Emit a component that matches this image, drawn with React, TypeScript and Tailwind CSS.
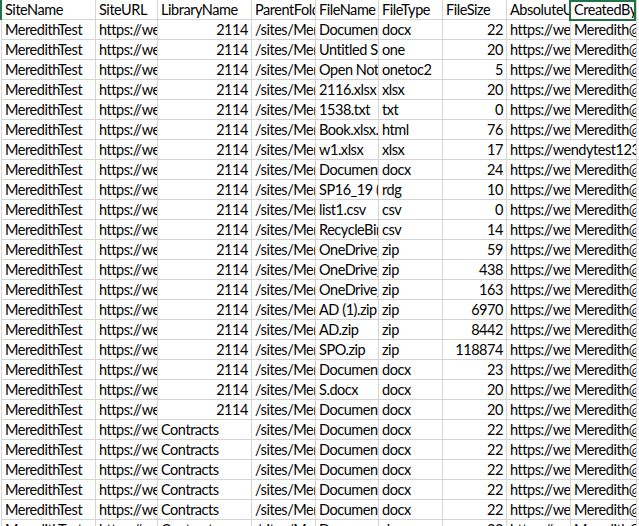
import React from 'react';

type Cell = { text: string; right?: boolean; span?: number };

const widths = [94, 62, 94, 64, 63, 64, 64, 64, 66];
const widthClass = ['w-[94px]', 'w-[62px]', 'w-[94px]', 'w-[64px]', 'w-[63px]', 'w-[64px]', 'w-[64px]', 'w-[64px]', 'w-[66px]'];

const header = ['SiteName', 'SiteURL', 'LibraryName', 'ParentFolder', 'FileName', 'FileType', 'FileSize', 'AbsoluteURL', 'CreatedBy'];

const files: [string, string, string][] = [
  ['Document1.docx', 'docx', '22'],
  ['Untitled Section.one', 'one', '20'],
  ['Open Notebook.onetoc2', 'onetoc2', '5'],
  ['2116.xlsx', 'xlsx', '20'],
  ['1538.txt', 'txt', '0'],
  ['Book.xlsx.html', 'html', '76'],
  ['w1.xlsx', 'xlsx', '17'],
  ['Document.docx', 'docx', '24'],
  ['SP16_19 (1).rdg', 'rdg', '10'],
  ['list1.csv', 'csv', '0'],
  ['RecycleBin.csv', 'csv', '14'],
  ['OneDrive_1.zip', 'zip', '59'],
  ['OneDrive_2.zip', 'zip', '438'],
  ['OneDrive_3.zip', 'zip', '163'],
  ['AD (1).zip', 'zip', '6970'],
  ['AD.zip', 'zip', '8442'],
  ['SPO.zip', 'zip', '118874'],
  ['Document2.docx', 'docx', '23'],
  ['S.docx', 'docx', '20'],
  ['Document3.docx', 'docx', '20'],
];

function buildRows(): Cell[][] {
  const rows: Cell[][] = [];
  files.forEach(([name, type, size], i) => {
    const base: Cell[] = [
      { text: 'MeredithTest' },
      { text: 'https://wendytest123.sharepoint.com/sites/MeredithTest' },
      { text: '2114', right: true },
      { text: '/sites/MeredithTest/2114' },
      { text: name },
      { text: type },
      { text: size, right: true },
    ];
    if (i === 6) {
      base.push({ text: 'https://wendytest123.sharepoint.com/sites/MeredithTest/2114/w1.xlsx', span: 2 });
    } else {
      base.push({ text: 'https://wendytest123.sharepoint.com/sites/MeredithTest/2114/' + name });
      base.push({ text: 'Meredith@wendytest123.onmicrosoft.com' });
    }
    rows.push(base);
  });
  for (let i = 0; i < 6; i++) {
    rows.push([
      { text: 'MeredithTest' },
      { text: 'https://wendytest123.sharepoint.com/sites/MeredithTest' },
      { text: 'Contracts' },
      { text: '/sites/MeredithTest/Contracts' },
      { text: 'Document' + (i + 4) + '.docx' },
      { text: 'docx' },
      { text: '22', right: true },
      { text: 'https://wendytest123.sharepoint.com/sites/MeredithTest/Contracts' },
      { text: 'Meredith@wendytest123.onmicrosoft.com' },
    ]);
  }
  return rows;
}

function Row({ cells, head }: { cells: Cell[]; head?: boolean }) {
  let col = 0;
  return (
    <div className="flex h-5">
      <div className={head ? 'w-[2px] shrink-0 bg-[#217346]' : 'w-[2px] shrink-0 border-r border-[#d4d4d4]'} />
      {cells.map((c, i) => {
        const span = c.span ?? 1;
        const w = widths.slice(col, col + span).reduce((a, b) => a + b, 0);
        const cls = span === 1 ? widthClass[col] : '';
        col += span;
        return (
          <div
            key={i}
            className={`${cls} shrink-0 overflow-hidden whitespace-nowrap border-b border-r border-[#d4d4d4] px-[3px] leading-[19px] ${c.right ? 'text-right' : ''}`}
            style={span > 1 ? { width: w } : undefined}
          >
            {c.text}
          </div>
        );
      })}
      <div className="flex-1 overflow-hidden whitespace-nowrap border-b border-[#d4d4d4] px-[2px] leading-[19px]">
        {head ? 'Created' : '2/15/2019'}
      </div>
    </div>
  );
}

export default function App() {
  const rows = buildRows();
  return (
    <div
      className="relative h-[526px] w-[639px] overflow-hidden bg-white text-[14.5px] tracking-[-0.45px] text-black"
      style={{ fontFamily: 'Lato, "Open Sans", sans-serif' }}
    >
      <Row head cells={header.map((h) => ({ text: h }))} />
      {rows.map((r, i) => (
        <Row key={i} cells={r} />
      ))}
      <div className="pointer-events-none absolute left-[569px] top-0 h-[21px] w-[67px] border-2 border-[#217346]" />
    </div>
  );
}
